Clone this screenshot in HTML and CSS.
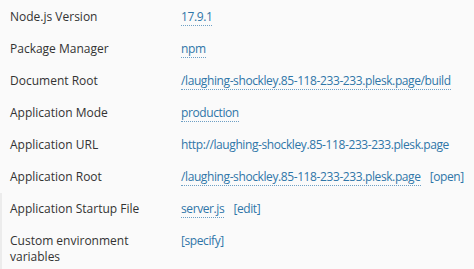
FILE: index.html
```html
<!DOCTYPE html>
<html lang="en">
<head>
  <meta charset="UTF-8">
  <title>Node.js Application Settings</title>
  <link rel="stylesheet" href="styles.css">
</head>
<body>
  <div class="settings">
    <div class="row">
      <div class="label">Node.js Version</div>
      <div class="value"><a class="link dotted" href="#">17.9.1</a></div>
    </div>
    <div class="row">
      <div class="label">Package Manager</div>
      <div class="value"><a class="link dotted" href="#">npm</a></div>
    </div>
    <div class="row">
      <div class="label">Document Root</div>
      <div class="value"><a class="link dotted" href="#">/laughing-shockley.85-118-233-233.plesk.page/build</a></div>
    </div>
    <div class="row">
      <div class="label">Application Mode</div>
      <div class="value"><a class="link dotted" href="#">production</a></div>
    </div>
    <div class="row">
      <div class="label">Application URL</div>
      <div class="value"><a class="link" href="#">http://laughing-shockley.85-118-233-233.plesk.page</a></div>
    </div>
    <div class="row">
      <div class="label">Application Root</div>
      <div class="value"><a class="link dotted" href="#">/laughing-shockley.85-118-233-233.plesk.page</a> <a class="link action" href="#">[open]</a></div>
    </div>
    <div class="row edged">
      <div class="label">Application Startup File</div>
      <div class="value"><a class="link dotted" href="#">server.js</a> <a class="link action" href="#">[edit]</a></div>
    </div>
    <div class="row edged">
      <div class="label">Custom environment variables</div>
      <div class="value"><a class="link" href="#">[specify]</a></div>
    </div>
  </div>
</body>
</html>
```

FILE: styles.css
```css
body {
  margin: 0;
  padding: 0;
  background-color: #fafafa;
  color: #333;
  font-family: "Open Sans", Arial, sans-serif;
  font-size: 12px;
}
.settings {
  padding-top: 1px;
}
.row {
  display: flex;
  padding: 8px 0;
  line-height: 16px;
}
.row.edged {
  border-left: 2px solid #ececec;
}
.row.edged .label {
  padding-left: 8px;
}
.label {
  width: 132px;
  padding-left: 10px;
  margin-right: 39px;
}
.value {
  flex: 1;
  white-space: nowrap;
}
.link {
  color: #2f76a8;
  text-decoration: none;
  letter-spacing: -0.4px;
}
.link.dotted {
  border-bottom: 1px dotted #6d9fc4;
}
.link.action {
  margin-left: 6px;
}
```
